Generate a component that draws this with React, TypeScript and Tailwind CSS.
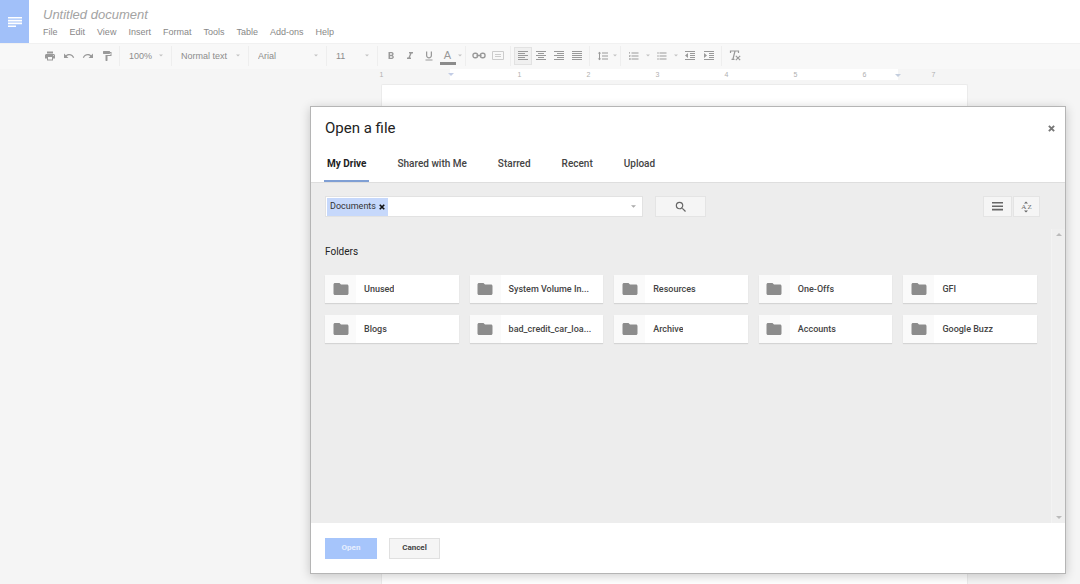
import { useState } from "react";
import type { ReactNode } from "react";
import type { IconType } from "react-icons";
import {
  MdFolder,
  MdFormatBold,
  MdFormatItalic,
  MdFormatLineSpacing,
  MdFormatListBulleted,
  MdFormatListNumbered,
  MdFormatPaint,
  MdFormatUnderlined,
  MdPrint,
  MdRedo,
  MdSearch,
  MdUndo,
} from "react-icons/md";
import { clsx } from "clsx";

const MENUS = ["File", "Edit", "View", "Insert", "Format", "Tools", "Table", "Add-ons", "Help"];
const TABS = ["My Drive", "Shared with Me", "Starred", "Recent", "Upload"];
const FOLDERS = [
  "Unused",
  "System Volume In...",
  "Resources",
  "One-Offs",
  "GFI",
  "Blogs",
  "bad_credit_car_loa...",
  "Archive",
  "Accounts",
  "Google Buzz",
];
const RULER = ["1", "", "1", "2", "3", "4", "5", "6", "7"];

// Bars are one pixel high with one pixel between them
const BARS = {
  left: "M0 0h10v1H0zM0 2h7v1H0zM0 4h10v1H0zM0 6h7v1H0zM0 8h10v1H0z",
  center: "M0 0h10v1H0zM2 2h6v1H2zM0 4h10v1H0zM2 6h6v1H2zM0 8h10v1H0z",
  right: "M0 0h10v1H0zM3 2h7v1H3zM0 4h10v1H0zM3 6h7v1H3zM0 8h10v1H0z",
  justify: "M0 0h10v1H0zM0 2h10v1H0zM0 4h10v1H0zM0 6h10v1H0zM0 8h10v1H0z",
  outdent: "M0 0h10v1H0zM5 2h5v1H5zM5 4h5v1H5zM5 6h5v1H5zM0 8h10v1H0zM3 2v5L0 4.5z",
  indent: "M0 0h10v1H0zM5 2h5v1H5zM5 4h5v1H5zM5 6h5v1H5zM0 8h10v1H0zM0 2v5l3-2.5z",
};

function Triangle({ className = "w-[6px]", up }: { className?: string; up?: boolean }) {
  return (
    <svg viewBox="0 0 6 3" className={clsx("h-[3px] shrink-0", className)} aria-hidden="true">
      <path d={up ? "M0 3 3 0l3 3z" : "M0 0h6L3 3z"} fill="currentColor" />
    </svg>
  );
}

function Cross({ className }: { className: string }) {
  return (
    <svg viewBox="0 0 8 8" className={className} stroke="currentColor" strokeWidth="2.2" aria-hidden="true">
      <path d="m1 1 6 6M7 1 1 7" />
    </svg>
  );
}

function Separator() {
  return <div className="mx-[3px] h-5 w-px shrink-0 bg-[#eee]" />;
}

function ToolButton({
  label,
  className = "w-[19px]",
  children,
}: {
  label: string;
  className?: string;
  children: ReactNode;
}) {
  return (
    <button type="button" aria-label={label} className={clsx("flex h-[18px] shrink-0 items-center justify-center", className)}>
      {children}
    </button>
  );
}

function Tool({ icon: Icon, label }: { icon: IconType; label: string }) {
  return (
    <ToolButton label={label}>
      <Icon className="size-3" />
    </ToolButton>
  );
}

function BarTool({ bars, label, className }: { bars: keyof typeof BARS; label: string; className?: string }) {
  return (
    <ToolButton label={label} className={className}>
      <svg viewBox="0 0 10 10" className="size-[10px]" fill="currentColor" aria-hidden="true">
        <path d={BARS[bars]} />
      </svg>
    </ToolButton>
  );
}

function Caret({ label, className }: { label: string; className: string }) {
  return (
    <ToolButton label={label} className={clsx("text-[#c4c4c4]", className)}>
      <Triangle className="w-[4px]" />
    </ToolButton>
  );
}

function ToolSelect({ label, value, className }: { label: string; value: string; className: string }) {
  return (
    <div className={clsx("relative flex shrink-0 items-center", className)}>
      <select
        aria-label={label}
        className="h-[18px] w-full appearance-none bg-transparent pl-[6px] text-[9px] leading-4 text-[#8c8c8c] outline-none"
        defaultValue={value}
      >
        <option>{value}</option>
      </select>
      <Triangle className="pointer-events-none absolute right-[5px] w-[4px] text-[#c4c4c4]" />
    </div>
  );
}

function Toolbar() {
  return (
    <div className="flex h-[26px] shrink-0 items-center border-t border-[#f1f1f1] bg-[#f8f8f8] pb-[2px] pl-10 text-[#999]">
      <Tool icon={MdPrint} label="Print" />
      <Tool icon={MdUndo} label="Undo" />
      <Tool icon={MdRedo} label="Redo" />
      <Tool icon={MdFormatPaint} label="Paint format" />
      <Separator />
      <ToolSelect label="Zoom" value="100%" className="w-[45px]" />
      <Separator />
      <ToolSelect label="Styles" value="Normal text" className="w-[70px]" />
      <Separator />
      <ToolSelect label="Font" value="Arial" className="w-[71px]" />
      <Separator />
      <ToolSelect label="Font size" value="11" className="w-[44px]" />
      <Separator />
      <Tool icon={MdFormatBold} label="Bold" />
      <Tool icon={MdFormatItalic} label="Italic" />
      <Tool icon={MdFormatUnderlined} label="Underline" />
      <button type="button" aria-label="Text color" className="flex h-[18px] w-[19px] shrink-0 flex-col items-center justify-end">
        <span className="text-[11px] leading-[13px]">A</span>
        <span className="h-[3px] w-4 bg-[#8c8c8c]" />
      </button>
      <Caret label="More text colors" className="w-[5px]" />
      <Separator />
      <ToolButton label="Insert link">
        <svg viewBox="0 0 14 7" className="h-[7px] w-[14px]" fill="none" stroke="currentColor" strokeWidth="1.4" aria-hidden="true">
          <rect x="1" y="1.2" width="4.6" height="4.6" rx="2" />
          <rect x="8.4" y="1.2" width="4.6" height="4.6" rx="2" />
          <path d="M4.5 3.5h5" />
        </svg>
      </ToolButton>
      <ToolButton label="Add comment">
        <svg viewBox="0 0 12 10" className="h-[10px] w-3" fill="none" stroke="#ccc" aria-hidden="true">
          <path d="M.5.5h11v8h-11zM3 3.5h6M3 5.5h6" />
        </svg>
      </ToolButton>
      <Separator />
      <BarTool bars="left" label="Align left" className="w-[18px] border border-[#e2e2e2] bg-[#f0f0f0]" />
      <BarTool bars="center" label="Align center" className="w-[18px]" />
      <BarTool bars="right" label="Align right" className="w-[18px]" />
      <BarTool bars="justify" label="Justify" className="w-[18px]" />
      <Separator />
      <Tool icon={MdFormatLineSpacing} label="Line spacing" />
      <Caret label="Line spacing options" className="w-[5px]" />
      <Separator />
      <Tool icon={MdFormatListNumbered} label="Numbered list" />
      <Caret label="Numbered list options" className="w-[9px]" />
      <Tool icon={MdFormatListBulleted} label="Bulleted list" />
      <Caret label="Bulleted list options" className="w-[9px]" />
      <BarTool bars="outdent" label="Decrease indent" />
      <BarTool bars="indent" label="Increase indent" />
      <Separator />
      <ToolButton label="Clear formatting">
        <svg viewBox="0 0 12 11" className="h-[11px] w-3" fill="none" stroke="currentColor" strokeWidth="1.2" aria-hidden="true">
          <path d="M1.5 3V1h8v2M6 1 4 9M2.5 9.4h3M6.8 5.8l4.4 4.4M11.2 5.8l-4.4 4.4" />
        </svg>
      </ToolButton>
    </div>
  );
}

function Ruler() {
  return (
    <div className="ml-[382px] flex h-[11px] w-[586px] shrink-0">
      <div className="relative flex w-full pl-[68px]">
        <div className="w-[448px] bg-white" />
        {/* Each inch label is centred on its tick, so the row starts half an inch early */}
        <div className="absolute inset-y-0 -left-[35px] flex items-center text-[7px] leading-none text-[#b0b0b0]">
          {RULER.map((n, i) => (
            <span key={i} className="flex w-[69px] justify-center">
              {n || <Triangle className="w-[8px] text-[#c3cde6]" />}
            </span>
          ))}
        </div>
        <Triangle className="absolute top-[5px] left-[513px] w-[6px] text-[#c4cede]" />
      </div>
    </div>
  );
}

function Editor() {
  return (
    <div className="flex h-full flex-col font-['Liberation_Sans',Arial,sans-serif]">
      <header className="flex h-[43px] shrink-0 bg-white">
        <a href="#home" aria-label="Docs home" className="flex w-[29px] items-center justify-center bg-[#a1c0f9]">
          <svg viewBox="0 0 14 10" className="h-[10px] w-[14px]" fill="#fff" aria-hidden="true">
            <path d="M0 0h14v1.6H0zM0 2.8h14v1.6H0zM0 5.6h14v1.6H0zM0 8.4h8V10H0z" />
          </svg>
        </a>
        <div className="flex flex-col pt-[7px] pl-[14px]">
          <h1 className="text-[13px] leading-4 text-[#a3a3a3] italic">Untitled document</h1>
          <nav className="mt-[2px] flex gap-3 text-[9px] leading-[14px] text-[#888]">
            {MENUS.map((m) => (
              <button key={m} type="button">
                {m}
              </button>
            ))}
          </nav>
        </div>
      </header>
      <Toolbar />
      <Ruler />
      <main className="mt-[4px] ml-[381px] w-[587px] flex-1 rounded-t-xs border border-b-0 border-[#ebebeb] bg-white" />
    </div>
  );
}

function GreyButton({ label, className, children }: { label: string; className: string; children: ReactNode }) {
  return (
    <button
      type="button"
      aria-label={label}
      className={clsx("flex h-[21px] items-center justify-center border border-[#e4e4e4] bg-[#f5f5f5] text-[#666]", className)}
    >
      {children}
    </button>
  );
}

function PathBar() {
  const [query, setQuery] = useState("");
  const [scoped, setScoped] = useState(true);

  return (
    <div className="flex shrink-0 items-center pt-[13px] pr-[25px] pl-[14px]">
      <div className="flex h-[21px] w-[318px] items-center border border-[#e2e2e2] bg-white px-px">
        {scoped && (
          <span className="flex h-[18px] items-center gap-[3px] bg-[#c6d8fb] px-[3px] text-[9px] text-[#333]">
            Documents
            <button type="button" aria-label="Remove Documents" onClick={() => setScoped(false)}>
              <Cross className="size-[6px] text-[#111]" />
            </button>
          </span>
        )}
        <input
          aria-label="Search files"
          value={query}
          onChange={(e) => setQuery(e.target.value)}
          className="h-full min-w-0 flex-1 px-1 text-[10px] outline-none"
        />
        <button type="button" aria-label="Search options" className="flex h-full w-4 items-center justify-center text-[#aaa]">
          <Triangle className="w-[5px]" />
        </button>
      </div>
      <GreyButton label="Search" className="ml-3 w-[51px]">
        <MdSearch className="size-[14px] stroke-[#666]" />
      </GreyButton>
      <GreyButton label="List view" className="ml-auto w-[29px]">
        <svg viewBox="0 0 11 9" className="h-[9px] w-[11px]" fill="currentColor" aria-hidden="true">
          <path d="M0 0h11v1.6H0zM0 3.4h11V5H0zM0 6.8h11v1.6H0z" />
        </svg>
      </GreyButton>
      <GreyButton label="Sort options" className="ml-px w-[27px]">
        <span className="flex flex-col items-center">
          <Triangle up className="w-[4px]" />
          <span className="font-['Liberation_Serif',serif] text-[7px] leading-[6px]">A Z</span>
          <Triangle className="w-[4px]" />
        </span>
      </GreyButton>
    </div>
  );
}

function FolderCard({ name }: { name: string }) {
  return (
    <button type="button" className="flex h-7 min-w-0 bg-white text-left shadow-[0_1px_1px_rgba(0,0,0,0.1)]">
      <span className="flex h-full w-[31px] shrink-0 items-center justify-center bg-[#fafafa]">
        <MdFolder className="size-[18px] text-[#8c8c8c]" />
      </span>
      <span className="truncate pl-2 text-[9px] leading-7 font-medium text-[#444]">{name}</span>
    </button>
  );
}

function FilePicker() {
  const [tab, setTab] = useState("My Drive");

  return (
    <div
      role="dialog"
      aria-labelledby="picker-title"
      className="absolute top-[106px] right-[14px] bottom-[10px] left-[310px] flex flex-col border border-[#b5b5b5] bg-white font-[Roboto,sans-serif] shadow-[0_2px_10px_rgba(0,0,0,0.2)]"
    >
      <div className="flex h-[42px] shrink-0 items-center justify-between pr-2 pl-[14px]">
        <h2 id="picker-title" className="text-[15px] text-[#222]">
          Open a file
        </h2>
        <button type="button" aria-label="Close" className="flex size-3 items-center justify-center">
          <Cross className="size-[7px] text-[#777]" />
        </button>
      </div>

      <div role="tablist" className="flex h-[34px] shrink-0 gap-[25px] border-b border-[#dedede] pl-[13px]">
        {TABS.map((t) => (
          <button
            key={t}
            type="button"
            role="tab"
            aria-selected={t === tab}
            onClick={() => setTab(t)}
            className={clsx(
              "border-b-2 px-[3px] pb-[3px] text-[10px]",
              t === tab ? "border-[#7f9fd4] font-bold text-[#222]" : "border-transparent font-medium text-[#444]"
            )}
          >
            {t}
          </button>
        ))}
      </div>

      <div className="flex min-h-0 flex-1 flex-col bg-[#ededed]">
        <PathBar />
        <div className="mt-3 flex min-h-0 flex-1">
          <section className="min-w-0 flex-1 px-[14px] pt-[15px]">
            <h3 className="text-[10px] leading-4 text-[#222]">Folders</h3>
            <div className="mt-[15px] grid grid-cols-5 gap-x-[11px] gap-y-3">
              {FOLDERS.map((f) => (
                <FolderCard key={f} name={f} />
              ))}
            </div>
          </section>
          {/* Scroll track */}
          <div className="flex w-[14px] flex-col items-center justify-between border-l border-[#f3f3f3] bg-[#efefef] py-1 text-[#bbb]">
            <Triangle up />
            <Triangle />
          </div>
        </div>
      </div>

      <div className="flex h-[50px] shrink-0 items-center gap-3 pl-[14px] text-[8px] font-bold">
        <button type="button" className="h-[21px] w-[52px] bg-[#a6c5fb] text-[#e6effe]">
          Open
        </button>
        <button type="button" className="h-[21px] w-[51px] border border-[#e0e0e0] bg-[#f5f5f5] text-[#444]">
          Cancel
        </button>
      </div>
    </div>
  );
}

export default function App() {
  return (
    <div className="relative h-screen overflow-hidden bg-[#f5f5f5]">
      <Editor />
      <FilePicker />
    </div>
  );
}
